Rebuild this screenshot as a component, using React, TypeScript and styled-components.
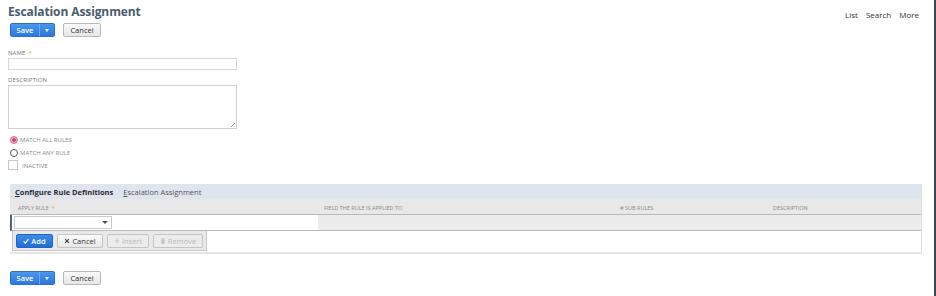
import React from "react";
import styled, { createGlobalStyle } from "styled-components";

const Global = createGlobalStyle`
  html, body { margin: 0; padding: 0; background: #fff; }
  body { font-family: "Open Sans", "Liberation Sans", sans-serif; color: #333; }
  * { box-sizing: border-box; }
`;

const Page = styled.div`
  width: 936px;
  height: 296px;
  border-right: 2px solid #3a4750;
  display: flex;
  flex-direction: column;
  overflow: hidden;
`;

const Header = styled.div`
  display: flex;
  justify-content: space-between;
  align-items: flex-start;
  padding: 2px 15px 0 8px;
  height: 21px;
`;

const Title = styled.h1`
  margin: 0;
  font-size: 12px;
  font-weight: 700;
  color: #4b5a70;
  line-height: 19px;
  letter-spacing: -0.1px;
`;

const Nav = styled.div`
  display: flex;
  gap: 8px;
  font-size: 8px;
  color: #333;
  padding-top: 7px;
`;

const ButtonRow = styled.div<{ $top?: number }>`
  display: flex;
  gap: 8px;
  padding-left: 10px;
  margin-top: ${(p) => p.$top ?? 0}px;
  height: 14px;
`;

const SplitButton = styled.div`
  display: flex;
  height: 14px;
  border-radius: 2px;
  overflow: hidden;
  background: linear-gradient(#4a97ee, #2b79dc);
  border: 1px solid #2a6fc9;
`;

const SplitMain = styled.span`
  width: 28px;
  display: flex;
  align-items: center;
  justify-content: center;
  color: #fff;
  font-size: 7.5px;
  font-weight: 600;
`;

const SplitArrow = styled.span`
  width: 15px;
  border-left: 1px solid #6fa8ee;
  display: flex;
  align-items: center;
  justify-content: center;
  &::after {
    content: "";
    border-left: 2.5px solid transparent;
    border-right: 2.5px solid transparent;
    border-top: 3px solid #fff;
  }
`;

const GrayButton = styled.span`
  width: 38px;
  height: 14px;
  display: flex;
  align-items: center;
  justify-content: center;
  border: 1px solid #b9b9b9;
  border-radius: 2px;
  background: linear-gradient(#fafafa, #e6e6e6);
  font-size: 7.5px;
  color: #333;
`;

const Form = styled.div`
  display: flex;
  flex-direction: column;
  padding-left: 8px;
  margin-top: 12px;
`;

const Label = styled.div<{ $top?: number }>`
  font-size: 6px;
  color: #777;
  text-transform: uppercase;
  letter-spacing: 0.1px;
  line-height: 8px;
  height: 8px;
  margin-top: ${(p) => p.$top ?? 0}px;
`;

const Star = styled.span`
  color: #e8a32a;
  margin-left: 3px;
`;

const Input = styled.div`
  width: 229px;
  height: 12px;
  border: 1px solid #d8d8d8;
  margin-top: 1px;
`;

const TextArea = styled.div`
  width: 229px;
  height: 44px;
  border: 1px solid #d0d0d0;
  margin-top: 1px;
  position: relative;
  &::after {
    content: "";
    position: absolute;
    right: 1px;
    bottom: 1px;
    width: 4px;
    height: 4px;
    background: linear-gradient(135deg, transparent 45%, #999 50%, transparent 60%, transparent 75%, #999 80%, transparent 90%);
  }
`;

const Choices = styled.div`
  display: flex;
  flex-direction: column;
  gap: 5px;
  margin-top: 7px;
`;

const Choice = styled.div`
  display: flex;
  align-items: center;
  gap: 2px;
  font-size: 6px;
  color: #8a8a8a;
  height: 8px;
  text-transform: uppercase;
`;

const Radio = styled.span<{ $on?: boolean }>`
  width: 8px;
  height: 8px;
  border-radius: 50%;
  border: 1px solid ${(p) => (p.$on ? "#d86a93" : "#555")};
  background: ${(p) => (p.$on ? "radial-gradient(circle, #d2457a 40%, #f2aac4 45%)" : "#fff")};
  margin-left: 2px;
`;

const Check = styled.span`
  width: 10px;
  height: 10px;
  border: 1px solid #c8c8c8;
  margin-right: 2px;
  margin-top: -3px;
`;

const Table = styled.div`
  margin: 14px 12px 0 10px;
  border-right: 1px solid #e0e0e0;
  border-bottom: 2px solid #e6e6e6;
  display: flex;
  flex-direction: column;
  height: 70px;
`;

const Tabs = styled.div`
  height: 15px;
  background: #dfe5ee;
  display: flex;
  align-items: center;
  gap: 10px;
  padding-left: 5px;
  font-size: 7.5px;
  color: #333;
`;

const Tab = styled.span<{ $active?: boolean }>`
  font-weight: ${(p) => (p.$active ? 700 : 400)};
  color: ${(p) => (p.$active ? "#2b2b2b" : "#555")};
  & u { text-decoration: underline; }
`;

const Grid = styled.div`
  display: grid;
  grid-template-columns: 306px 296px 153px 1fr;
`;

const HeadRow = styled(Grid)`
  height: 16px;
  background: #e8e8e8;
  border-bottom: 1px solid #b9b9b9;
`;

const HeadCell = styled.div`
  font-size: 5.5px;
  color: #888;
  text-transform: uppercase;
  display: flex;
  align-items: center;
  padding-left: 8px;
  padding-top: 2px;
`;

const EditRow = styled(Grid)`
  height: 16px;
  border-bottom: 1px solid #b9b9b9;
  border-left: 2px solid #4f6276;
`;

const WhiteCell = styled.div`
  background: #fff;
  display: flex;
  align-items: center;
  padding-left: 2px;
`;

const HatchCell = styled.div`
  background: #ececec;
`;

const Select = styled.div`
  width: 98px;
  height: 13px;
  border: 1px solid #c6cbd1;
  display: flex;
  justify-content: flex-end;
  align-items: center;
  padding-right: 3px;
  &::after {
    content: "";
    border-left: 3px solid transparent;
    border-right: 3px solid transparent;
    border-top: 3.5px solid #555;
  }
`;

const ActionBar = styled.div`
  margin-left: 2px;
  width: 195px;
  height: 20px;
  background: #e9e9e9;
  border: 1px solid #c9c9c9;
  border-top: none;
  display: flex;
  align-items: center;
  gap: 4px;
  padding-left: 3px;
`;

const ActBtn = styled.span<{ $w: number; $kind: "primary" | "normal" | "disabled" }>`
  width: ${(p) => p.$w}px;
  height: 14px;
  border-radius: 2px;
  display: flex;
  align-items: center;
  justify-content: center;
  gap: 2px;
  font-size: 7.5px;
  font-weight: ${(p) => (p.$kind === "primary" ? 600 : 400)};
  color: ${(p) => (p.$kind === "primary" ? "#fff" : p.$kind === "disabled" ? "#b8b8b8" : "#333")};
  background: ${(p) =>
    p.$kind === "primary"
      ? "linear-gradient(#3d8cea, #1f6ed6)"
      : p.$kind === "disabled"
      ? "#ececec"
      : "linear-gradient(#fbfbfb, #e8e8e8)"};
  border: 1px solid ${(p) => (p.$kind === "primary" ? "#2166c4" : "#c4c4c4")};
`;

const Footer = styled(ButtonRow)`
  margin-top: 17px;
`;

const Icon = styled.svg`
  width: 6px;
  height: 6px;
`;

export default function App() {
  return (
    <>
      <Global />
      <Page>
        <Header>
          <Title>Escalation Assignment</Title>
          <Nav>
            <span>List</span>
            <span>Search</span>
            <span>More</span>
          </Nav>
        </Header>
        <ButtonRow $top={2}>
          <SplitButton>
            <SplitMain>Save</SplitMain>
            <SplitArrow />
          </SplitButton>
          <GrayButton>Cancel</GrayButton>
        </ButtonRow>
        <Form>
          <Label>
            Name<Star>*</Star>
          </Label>
          <Input />
          <Label $top={6}>Description</Label>
          <TextArea />
          <Choices>
            <Choice>
              <Radio $on />
              Match all rules
            </Choice>
            <Choice>
              <Radio />
              Match any rule
            </Choice>
            <Choice>
              <Check />
              Inactive
            </Choice>
          </Choices>
        </Form>
        <Table>
          <Tabs>
            <Tab $active>
              <u>C</u>onfigure Rule Definitions
            </Tab>
            <Tab>
              <u>E</u>scalation Assignment
            </Tab>
          </Tabs>
          <HeadRow>
            <HeadCell>
              Apply Rule<Star>*</Star>
            </HeadCell>
            <HeadCell>Field the rule is applied to</HeadCell>
            <HeadCell># sub rules</HeadCell>
            <HeadCell>Description</HeadCell>
          </HeadRow>
          <EditRow>
            <WhiteCell>
              <Select />
            </WhiteCell>
            <HatchCell />
            <HatchCell />
            <HatchCell />
          </EditRow>
          <ActionBar>
            <ActBtn $w={37} $kind="primary">
              <Icon viewBox="0 0 10 10">
                <path d="M1 5.5 L4 8.5 L9 2" stroke="#fff" strokeWidth="2" fill="none" />
              </Icon>
              Add
            </ActBtn>
            <ActBtn $w={46} $kind="normal">
              <Icon viewBox="0 0 10 10">
                <path d="M2 2 L8 8 M8 2 L2 8" stroke="#444" strokeWidth="2" fill="none" />
              </Icon>
              Cancel
            </ActBtn>
            <ActBtn $w={42} $kind="disabled">
              <Icon viewBox="0 0 10 10">
                <path d="M5 1 V9 M1 5 H9" stroke="#c4c4c4" strokeWidth="1.6" fill="none" />
              </Icon>
              Insert
            </ActBtn>
            <ActBtn $w={50} $kind="disabled">
              <Icon viewBox="0 0 10 10">
                <path d="M2 2 H8 M4 1 H6 M3 3 V9 H7 V3" stroke="#c4c4c4" strokeWidth="1.4" fill="#c4c4c4" />
              </Icon>
              Remove
            </ActBtn>
          </ActionBar>
        </Table>
        <Footer>
          <SplitButton>
            <SplitMain>Save</SplitMain>
            <SplitArrow />
          </SplitButton>
          <GrayButton>Cancel</GrayButton>
        </Footer>
      </Page>
    </>
  );
}
